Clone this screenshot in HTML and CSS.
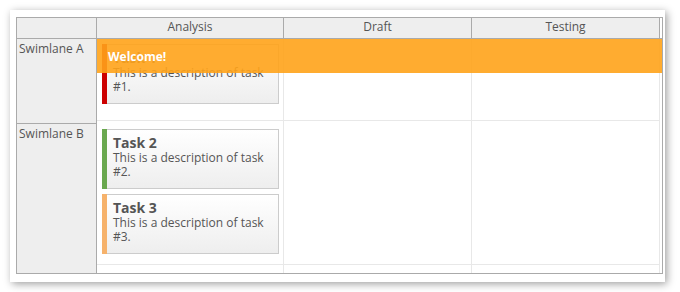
FILE: index.html
```html
<!DOCTYPE html>
<html>
<head>
<meta charset="utf-8">
<link rel="stylesheet" href="styles.css">
</head>
<body>
<div class="frame">
  <div class="board">
    <div class="head">
      <div class="corner"></div>
      <div class="col-head">Analysis</div>
      <div class="col-head">Draft</div>
      <div class="col-head">Testing</div>
      <div class="col-pad"></div>
    </div>
    <div class="body">
      <div class="lanes">
        <div class="lane lane-a">Swimlane A</div>
        <div class="lane lane-b">Swimlane B</div>
      </div>
      <div class="col col-1">
        <div class="cell cell-a">
          <div class="card">
            <div class="bar red"></div>
            <div class="card-body">
              <div class="title">Task 1</div>
              <div class="desc">This is a description of task #1.</div>
            </div>
          </div>
        </div>
        <div class="cell cell-b">
          <div class="card">
            <div class="bar green"></div>
            <div class="card-body">
              <div class="title">Task 2</div>
              <div class="desc">This is a description of task #2.</div>
            </div>
          </div>
          <div class="card">
            <div class="bar orange"></div>
            <div class="card-body">
              <div class="title">Task 3</div>
              <div class="desc">This is a description of task #3.</div>
            </div>
          </div>
        </div>
        <div class="cell-rest"></div>
      </div>
      <div class="col col-2">
        <div class="cell cell-a"></div>
        <div class="cell cell-b"></div>
        <div class="cell-rest"></div>
      </div>
      <div class="col col-3">
        <div class="cell cell-a"></div>
        <div class="cell cell-b"></div>
        <div class="cell-rest"></div>
      </div>
      <div class="col-pad"></div>
      <div class="welcome">Welcome!</div>
    </div>
  </div>
</div>
</body>
</html>
```

FILE: styles.css
```css
html, body {
  margin: 0;
  padding: 0;
  background: #ffffff;
}

body {
  padding: 10px;
  font-family: "Open Sans", "Noto Sans", sans-serif;
  font-size: 12px;
  color: #555555;
}

.frame {
  width: 655px;
  height: 272px;
  box-sizing: border-box;
  padding: 7px 0 0 6px;
  background: #ffffff;
  box-shadow: 2px 2px 8px rgba(0, 0, 0, 0.38);
}

.board {
  width: 647px;
  height: 257px;
  box-sizing: border-box;
  border: 1px solid #aaaaaa;
  display: flex;
  flex-direction: column;
}

.head {
  display: flex;
  height: 21px;
  box-sizing: border-box;
  border-bottom: 1px solid #aaaaaa;
  background: #eeeeee;
}

.corner {
  width: 80px;
  box-sizing: border-box;
  border-right: 1px solid #aaaaaa;
}

.col-head {
  box-sizing: border-box;
  border-right: 1px solid #aaaaaa;
  text-align: center;
  line-height: 18px;
}

.col-head:nth-child(2) { width: 187px; }
.col-head:nth-child(3) { width: 188px; }
.col-head:nth-child(4) { width: 188px; }

.col-pad {
  width: 2px;
  background: #ffffff;
}

.body {
  position: relative;
  display: flex;
  flex: 1;
}

.lanes {
  width: 80px;
  box-sizing: border-box;
  border-right: 1px solid #aaaaaa;
  background: #eeeeee;
  display: flex;
  flex-direction: column;
}

.lane {
  box-sizing: border-box;
  padding: 2px 2px;
  line-height: 16px;
}

.lane-a {
  height: 85px;
  border-bottom: 1px solid #aaaaaa;
}

.lane-b {
  flex: 1;
}

.col {
  box-sizing: border-box;
  border-right: 1px solid #e8e8e8;
  display: flex;
  flex-direction: column;
}

.col-1 { width: 187px; }
.col-2 { width: 188px; }
.col-3 { width: 188px; }

.cell {
  box-sizing: border-box;
  border-bottom: 1px solid #e8e8e8;
  display: flex;
  flex-direction: column;
  gap: 5px;
  padding-left: 5px;
}

.cell-a {
  height: 82px;
  padding-top: 5px;
}

.cell-b {
  height: 144px;
  padding-top: 8px;
}

.cell-rest {
  flex: 1;
}

.card {
  display: flex;
  width: 177px;
  height: 60px;
}

.bar {
  width: 5px;
  flex: none;
}

.red { background: #cc0000; }
.green { background: #6aa84f; }
.orange { background: #f6b26b; }

.card-body {
  flex: 1;
  box-sizing: border-box;
  border: 1px solid #cccccc;
  border-left: none;
  padding: 5px 6px 0 6px;
  background: linear-gradient(to bottom, #ffffff 0%, #eeeeee 100%);
}

.title {
  font-size: 14px;
  font-weight: bold;
  line-height: 17px;
  margin-top: -1px;
  color: #555555;
}

.desc {
  font-size: 12px;
  line-height: 14px;
  color: #555555;
}

.welcome {
  position: absolute;
  left: 80px;
  top: 0;
  right: 0;
  height: 34px;
  display: flex;
  align-items: center;
  padding-left: 11px;
  background: rgba(255, 163, 26, 0.9);
  color: #ffffff;
  font-weight: bold;
  font-size: 12px;
}
```
